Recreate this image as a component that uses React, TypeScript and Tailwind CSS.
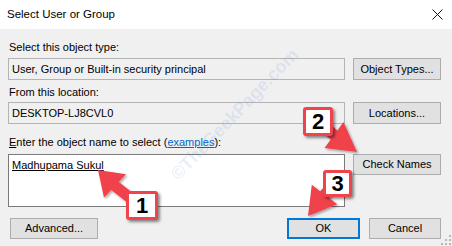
import React from 'react';

type Pt = [number, number];

// build a block arrow polygon: tip, head base midpoint, head half width, shaft end
function arrowPoints(tip: Pt, base: Pt, headHalf: number, tail: Pt, shaftHalf: number): string {
  const dx = base[0] - tip[0];
  const dy = base[1] - tip[1];
  const len = Math.sqrt(dx * dx + dy * dy);
  const ux = dx / len;
  const uy = dy / len;
  const px = -uy;
  const py = ux;
  const pts: Pt[] = [
    tip,
    [base[0] + px * headHalf, base[1] + py * headHalf],
    [base[0] + px * shaftHalf, base[1] + py * shaftHalf],
    [tail[0] + px * shaftHalf, tail[1] + py * shaftHalf],
    [tail[0] - px * shaftHalf, tail[1] - py * shaftHalf],
    [base[0] - px * shaftHalf, base[1] - py * shaftHalf],
    [base[0] - px * headHalf, base[1] - py * headHalf],
  ];
  return pts.map(p => `${p[0].toFixed(1)},${p[1].toFixed(1)}`).join(' ');
}

const Btn = ({ title, primary, className }: { title: string, primary?: boolean, className?: string }) => (
  <div className={`flex items-center justify-center bg-[#e1e1e1] text-black ${primary ? 'border-2 border-[#0078d7]' : 'border border-[#adadad]'} ${className || ''}`}>
    {title}
  </div>
);

const Badge = ({ n, className }: { n: string, className: string }) => (
  <div className={`absolute flex items-center justify-center bg-white border-[3px] border-[#f0434c] rounded-[3px] shadow-[2px_2px_3px_rgba(0,0,0,0.45)] text-black font-bold text-[22px] leading-none ${className}`}>
    {n}
  </div>
);

export default function App() {
  return (
    <div className="relative w-[452px] h-[246px] overflow-hidden bg-[#f0f0f0] text-[11px] leading-[15px] text-black" style={{ fontFamily: '"Liberation Sans", Arial, sans-serif' }}>
      <div className="h-[29px] bg-white flex items-center justify-between pl-[7px] pr-[9px]">
        <span className="text-[11.5px]">Select User or Group</span>
        <svg width="11" height="11" viewBox="0 0 11 11">
          <path d="M0.5 0.5 L10.5 10.5 M10.5 0.5 L0.5 10.5" stroke="#111" strokeWidth="1" />
        </svg>
      </div>

      <div className="pl-[8px] pr-[11px] pt-[11px]">
        <div className="pl-[1px]">Select this object type:</div>
        <div className="mt-[3px] flex gap-[8px] h-[22px]">
          <div className="w-[337px] border border-[#b4b4b4] flex items-center pl-[3px]">User, Group or Built-in security principal</div>
          <Btn title="Object Types..." className="w-[88px]" />
        </div>

        <div className="mt-[5px] pl-[1px]">From this location:</div>
        <div className="mt-[2px] flex gap-[8px] h-[22px]">
          <div className="w-[337px] border border-[#b4b4b4] flex items-center pl-[3px]">DESKTOP-LJ8CVL0</div>
          <Btn title="Locations..." className="w-[88px]" />
        </div>

        <div className="mt-[11px] pl-[1px]">
          <span className="underline">E</span>nter the object name to select (<span className="text-[#0066cc] underline">examples</span>):
        </div>
        <div className="mt-[4px] flex gap-[8px]">
          <div className="w-[337px] h-[53px] bg-white border border-[#7a7a7a] pl-[3px] pt-[3px]">
            <span className="underline">Madhupama Sukul</span>
          </div>
          <Btn title="Check Names" className="w-[88px] h-[21px]" />
        </div>

        <div className="mt-[11px] flex h-[21px] items-stretch">
          <Btn title="Advanced..." className="w-[88px] ml-[2px]" />
          <div className="flex-1" />
          <Btn title="OK" primary className="w-[73px]" />
          <Btn title="Cancel" className="w-[72px] ml-[9px]" />
        </div>
      </div>

      <svg className="absolute right-[1px] bottom-[1px]" width="10" height="10" viewBox="0 0 10 10">
        <g fill="#b8b8b8">
          <rect x="8" y="0" width="2" height="2" />
          <rect x="4" y="4" width="2" height="2" />
          <rect x="8" y="4" width="2" height="2" />
          <rect x="0" y="8" width="2" height="2" />
          <rect x="4" y="8" width="2" height="2" />
          <rect x="8" y="8" width="2" height="2" />
        </g>
      </svg>

      <div className="absolute left-[145px] top-[107px] w-[180px] text-center text-[18px] font-bold text-[#2a6fc9] opacity-[0.1] rotate-[-46deg] whitespace-nowrap pointer-events-none" style={{ fontFamily: '"Liberation Sans", Arial, sans-serif' }}>
        ©TheGeekPage.com
      </div>

      <svg className="absolute left-0 top-0 pointer-events-none" width="452" height="246" viewBox="0 0 452 246">
        <defs>
          <filter id="sh" x="-20%" y="-20%" width="140%" height="140%">
            <feDropShadow dx="1.5" dy="1.5" stdDeviation="1.2" floodColor="#000" floodOpacity="0.35" />
          </filter>
        </defs>
        <g fill="#f0434c" filter="url(#sh)">
          <polygon points={arrowPoints([98, 170], [115, 186], 16, [138, 204], 5.5)} />
          <polygon points={arrowPoints([357, 152], [334, 135], 16, [318, 121], 5.5)} />
          <polygon points={arrowPoints([308, 216], [324.5, 194.5], 16, [336, 182], 5.5)} />
        </g>
      </svg>

      <Badge n="1" className="left-[126px] top-[191px] w-[32px] h-[29px]" />
      <Badge n="2" className="left-[303px] top-[107px] w-[30px] h-[29px]" />
      <Badge n="3" className="left-[323px] top-[170px] w-[29px] h-[27px]" />
    </div>
  );
}
